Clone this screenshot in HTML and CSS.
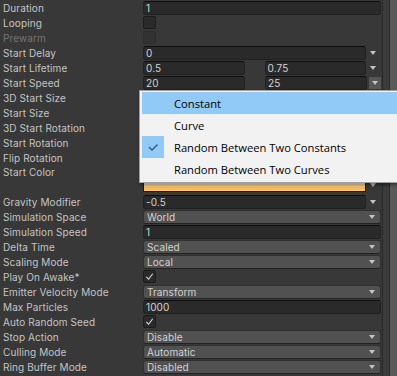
FILE: index.html
```html
<!DOCTYPE html>
<html lang="en">
<head>
  <meta charset="UTF-8">
  <title>Particle System</title>
  <link rel="stylesheet" href="styles.css">
</head>
<body>
  <div class="window">
    <div class="inspector">
      <div class="row"><span class="label">Duration</span><div class="value"><div class="field">1</div></div></div>
      <div class="row"><span class="label">Looping</span><div class="value"><div class="toggle"></div></div></div>
      <div class="row"><span class="label off">Prewarm</span><div class="value"><div class="toggle off"></div></div></div>
      <div class="row"><span class="label">Start Delay</span><div class="value"><div class="field">0</div><span class="arrow"></span></div></div>
      <div class="row"><span class="label">Start Lifetime</span><div class="value"><div class="pair"><div class="field">0.5</div><div class="field">0.75</div></div><span class="arrow"></span></div></div>
      <div class="row"><span class="label">Start Speed</span><div class="value"><div class="pair"><div class="field">20</div><div class="field">25</div></div><span class="arrow hover"></span></div></div>
      <div class="row"><span class="label">3D Start Size</span><div class="value"><div class="toggle"></div></div></div>
      <div class="row"><span class="label">Start Size</span><div class="value"><div class="field">1</div><span class="arrow"></span></div></div>
      <div class="row"><span class="label">3D Start Rotation</span><div class="value"><div class="toggle"></div></div></div>
      <div class="row"><span class="label">Start Rotation</span><div class="value"><div class="field">0</div><span class="arrow"></span></div></div>
      <div class="row"><span class="label">Flip Rotation</span><div class="value"><div class="field">0</div></div></div>
      <div class="row tall"><span class="label">Start Color</span><div class="value"><div class="color"><div class="alpha"></div></div><span class="arrow"></span></div></div>
      <div class="row"><span class="label">Gravity Modifier</span><div class="value"><div class="field">-0.5</div><span class="arrow"></span></div></div>
      <div class="row"><span class="label">Simulation Space</span><div class="value"><div class="enum">World</div></div></div>
      <div class="row"><span class="label">Simulation Speed</span><div class="value"><div class="field">1</div></div></div>
      <div class="row"><span class="label">Delta Time</span><div class="value"><div class="enum">Scaled</div></div></div>
      <div class="row"><span class="label">Scaling Mode</span><div class="value"><div class="enum">Local</div></div></div>
      <div class="row"><span class="label">Play On Awake*</span><div class="value"><div class="toggle"><svg viewBox="0 0 12 12"><polyline points="2.5,6.5 5,9 9.5,3"/></svg></div></div></div>
      <div class="row"><span class="label">Emitter Velocity Mode</span><div class="value"><div class="enum">Transform</div></div></div>
      <div class="row"><span class="label">Max Particles</span><div class="value"><div class="field">1000</div></div></div>
      <div class="row"><span class="label">Auto Random Seed</span><div class="value"><div class="toggle"><svg viewBox="0 0 12 12"><polyline points="2.5,6.5 5,9 9.5,3"/></svg></div></div></div>
      <div class="row"><span class="label">Stop Action</span><div class="value"><div class="enum">Disable</div></div></div>
      <div class="row"><span class="label">Culling Mode</span><div class="value"><div class="enum">Automatic</div></div></div>
      <div class="row"><span class="label">Ring Buffer Mode</span><div class="value"><div class="enum">Disabled</div></div></div>
    </div>
    <div class="scrollbar"><div class="track"></div><div class="thumb"></div></div>
  </div>

  <div class="menu">
    <div class="item active"><span class="tick"></span>Constant</div>
    <div class="item"><span class="tick"></span>Curve</div>
    <div class="item"><span class="tick on"><svg viewBox="0 0 22 22"><polyline points="7,11 10,14 15.5,8.5"/></svg></span>Random Between Two Constants</div>
    <div class="item"><span class="tick"></span>Random Between Two Curves</div>
  </div>
</body>
</html>
```
FILE: styles.css
```css
body {
  margin: 0;
  background: #383838;
  font-family: Inter, "Liberation Sans", sans-serif;
  font-size: 10px;
  letter-spacing: 0.1px;
  color: #c4c4c4;
  overflow: hidden;
}

.window {
  display: flex;
  height: 376px;
}

.inspector {
  width: 383px;
}

.row {
  display: flex;
  align-items: center;
  height: 15px;
}

.row.tall {
  height: 29px;
  align-items: flex-start;
}

.row.tall .label {
  line-height: 15px;
}

.label {
  width: 140px;
  padding-left: 3px;
  white-space: nowrap;
}

.label.off {
  color: #747474;
}

.value {
  display: flex;
  align-items: center;
  width: 238px;
  height: 100%;
}

.field {
  flex: 1;
  height: 12px;
  line-height: 12px;
  padding-left: 2px;
  background: #2a2a2a;
  border: 1px solid #212121;
  border-top-color: #0e0e0e;
  border-radius: 3px;
  color: #d2d2d2;
}

.pair {
  flex: 1;
  display: flex;
  gap: 20px;
}

.arrow {
  position: relative;
  width: 15px;
  height: 12px;
}

.arrow::after {
  content: "";
  position: absolute;
  left: 4px;
  top: 4px;
  border-left: 3.5px solid transparent;
  border-right: 3.5px solid transparent;
  border-top: 4px solid #c4c4c4;
}

.arrow.hover {
  background: #565656;
  margin-left: 2px;
  width: 12px;
}

.arrow.hover::after {
  left: 2.5px;
}

.toggle {
  width: 11px;
  height: 11px;
  background: #2a2a2a;
  border: 1px solid #1c1c1c;
  border-radius: 2px;
}

.toggle.off {
  background: #323232;
  border-color: #2c2c2c;
}

.toggle svg {
  display: block;
  width: 11px;
  height: 11px;
  fill: none;
  stroke: #dcdcdc;
  stroke-width: 1.2;
}

.enum {
  flex: 1;
  position: relative;
  height: 12px;
  line-height: 12px;
  padding-left: 3px;
  background: #515151;
  border: 1px solid #303030;
  border-bottom-color: #232323;
  border-radius: 3px;
  color: #d2d2d2;
}

.enum::after {
  content: "";
  position: absolute;
  right: 5px;
  top: 4px;
  border-left: 3.5px solid transparent;
  border-right: 3.5px solid transparent;
  border-top: 4px solid #c4c4c4;
}

.color {
  flex: 1;
  height: 24px;
  margin-top: 1px;
  align-self: flex-start;
  background: #ffffff;
  border: 1px solid #1c1c1c;
  display: flex;
  flex-direction: column;
  justify-content: flex-end;
}

.alpha {
  height: 7px;
  background: linear-gradient(#fad9a0, #f5b552 60%, #f8c880);
}

.row.tall .arrow {
  margin-top: 14px;
  align-self: flex-start;
}

.scrollbar {
  display: flex;
  width: 14px;
  border-left: 1px solid #2a2a2a;
}

.track {
  width: 6px;
  background: #3b3b3b;
  border-right: 1px solid #2a2a2a;
}

.thumb {
  flex: 1;
  background: #5a5a5a;
}

.menu {
  position: absolute;
  left: 139px;
  top: 90px;
  box-sizing: border-box;
  width: 258px;
  padding: 1px 0 2px 2px;
  background: #f2f2f2;
  border: 1px solid #a0a0a0;
  border-right: none;
  box-shadow: 1px 2px 3px rgba(0, 0, 0, 0.45);
  font-family: "Open Sans", "Noto Sans", sans-serif;
  font-size: 11.2px;
  letter-spacing: 0;
  color: #000;
}

.item {
  display: flex;
  align-items: center;
  height: 22px;
  white-space: nowrap;
}

.item.active {
  background: #91c9f7;
}

.tick {
  width: 22px;
  height: 22px;
  margin-right: 10px;
}

.tick.on {
  background: #91c9f7;
}

.tick svg {
  display: block;
  width: 22px;
  height: 22px;
  fill: none;
  stroke: #3a5570;
  stroke-width: 1.3;
}
```
